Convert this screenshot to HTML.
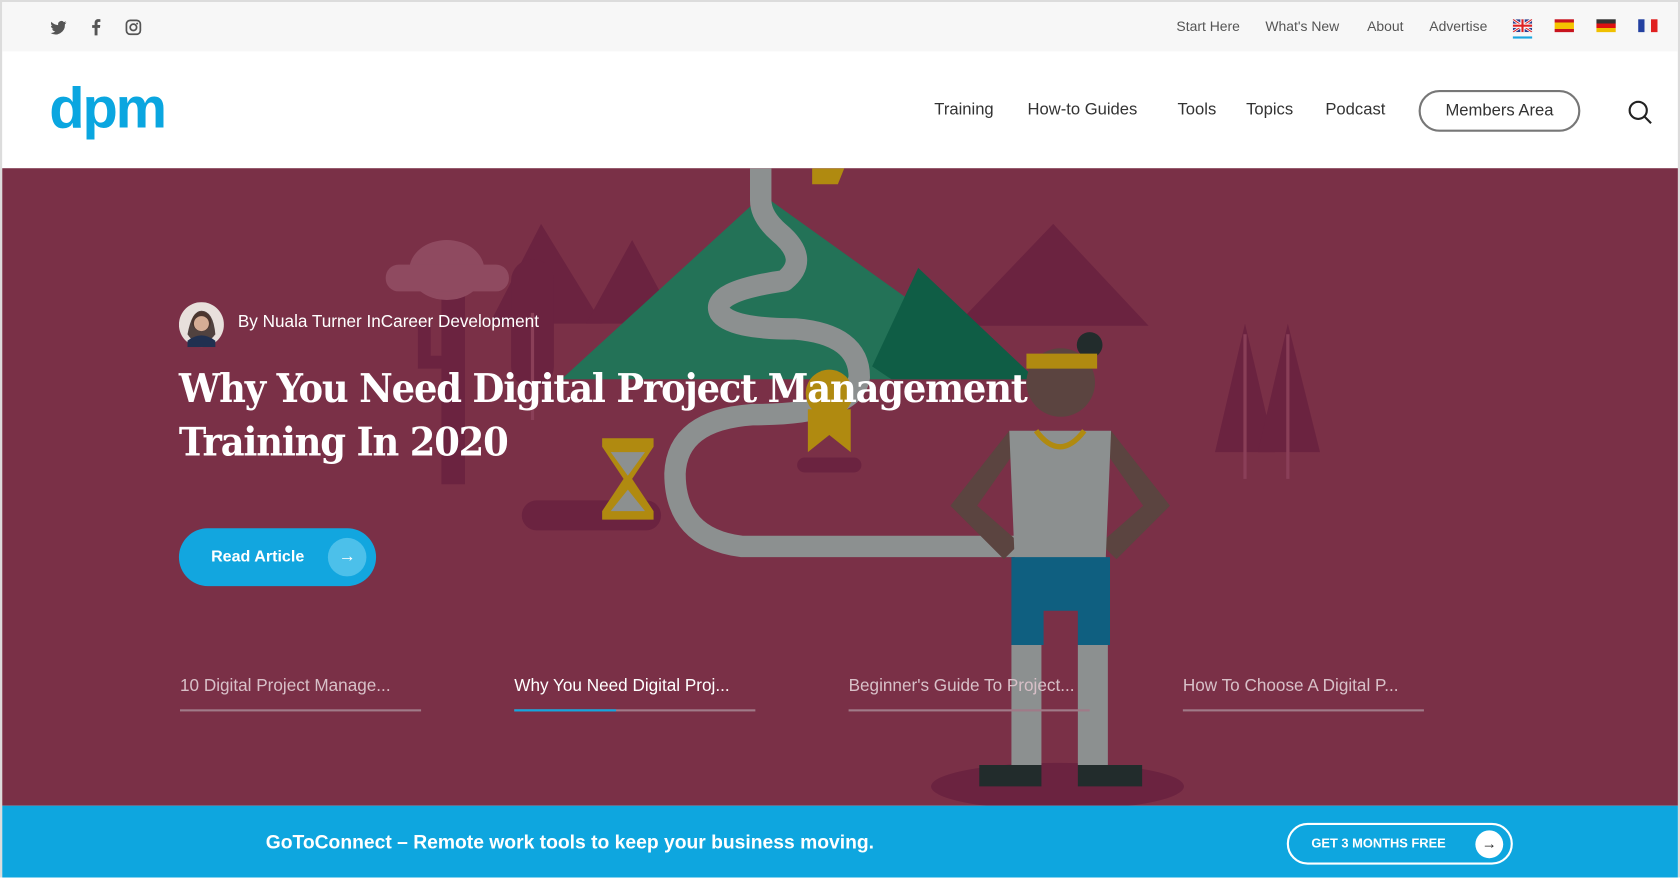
<!DOCTYPE html>
<html><head><meta charset="utf-8"><style>
*{margin:0;padding:0;box-sizing:border-box}
html,body{width:1680px;height:877px;overflow:hidden;background:#fff;font-family:"Liberation Sans",sans-serif}
#w{position:absolute;left:0;top:0;width:1568px;height:819px;transform:scale(1.07143);transform-origin:0 0;border:2px solid #dcdcdc;border-bottom:none;overflow:hidden}
.top{position:absolute;left:0;top:0;width:1568px;height:46px;background:#f7f7f7}
.a{position:absolute;white-space:nowrap}
.tl{font-size:13px;color:#555;top:15px}
.nav{font-size:15.5px;color:#333;top:92px}
.hero{position:absolute;left:0;top:155px;width:1568px;height:595px;background:#7a3047;overflow:hidden}
.bar{position:absolute;left:0;top:750px;width:1568px;height:69px;background:#0ea6df}
.tab{font-size:16px;color:#d8c0c8;top:630px}
.ul{position:absolute;top:660px;height:2px;width:225px;background:#a07a88}
</style></head><body><div id="w">
<div class="top"></div>
<svg class="a" style="left:45px;top:15px" width="100" height="18" viewBox="0 0 100 18">
<path d="M15 4c-.6.3-1.2.4-1.8.5.7-.4 1.1-1 1.4-1.7-.6.4-1.3.6-2 .8a3.1 3.1 0 0 0-5.3 2.8C4.700 6.300 2.500 5.100 1 3.300c-.8 1.400-.3 3.200 1 4.100-.5 0-1-.2-1.400-.4 0 1.500 1.100 2.800 2.500 3.100-.5.1-1 .2-1.400.1.4 1.300 1.600 2.100 2.900 2.200A6.300 6.300 0 0 1 0 13.700 8.800 8.800 0 0 0 13.600 6v-.4c.6-.4 1.100-1 1.400-1.600z" fill="#555"/>
<path d="M44 16V9h2.3l.3-2.700H44V4.700c0-.8.200-1.300 1.300-1.300h1.400V1c-.3 0-1.100-.1-2-.1-2 0-3.400 1.200-3.400 3.500v2h-2.300V9h2.300v7z" fill="#555"/>
<rect x="71" y="2" width="13" height="13" rx="3.5" fill="none" stroke="#555" stroke-width="1.6"/><circle cx="77.5" cy="8.5" r="3" fill="none" stroke="#555" stroke-width="1.6"/><circle cx="81" cy="5" r=".9" fill="#555"/>
</svg>
<div class="a tl" style="left:1096px">Start Here</div>
<div class="a tl" style="left:1179px">What's New</div>
<div class="a tl" style="left:1274px">About</div>
<div class="a tl" style="left:1332px">Advertise</div>
<svg class="a" style="left:1410px;top:16px" width="18" height="12" viewBox="0 0 18 12"><rect width="18" height="12" fill="#2b3f8e"/><path d="M0 0L18 12M18 0L0 12" stroke="#fff" stroke-width="2.5"/><path d="M0 0L18 12M18 0L0 12" stroke="#d22" stroke-width="1"/><path d="M9 0v12M0 6h18" stroke="#fff" stroke-width="4"/><path d="M9 0v12M0 6h18" stroke="#d22" stroke-width="2"/></svg>
<div class="a" style="left:1410px;top:32px;width:18px;height:2px;background:#19a6df"></div>
<div class="a" style="left:1449px;top:16px;width:18px;height:12px;background:linear-gradient(#c8141e 0 25%,#f5c400 25% 75%,#c8141e 75%)"></div>
<div class="a" style="left:1488px;top:16px;width:18px;height:12px;background:linear-gradient(#333 0 33%,#d11 33% 66%,#f0c000 66%)"></div>
<div class="a" style="left:1527px;top:16px;width:18px;height:12px;background:linear-gradient(90deg,#2340a0 0 33%,#f3f3f3 33% 66%,#e02020 66%)"></div>
<div class="a" style="left:44px;top:66px;font-size:54px;font-weight:bold;color:#0aa6e0;letter-spacing:-2px;line-height:66px">dpm</div>
<div class="a nav" style="left:870px">Training</div>
<div class="a nav" style="left:957px">How-to Guides</div>
<div class="a nav" style="left:1097px">Tools</div>
<div class="a nav" style="left:1161px">Topics</div>
<div class="a nav" style="left:1235px">Podcast</div>
<div class="a" style="left:1322px;top:82px;width:151px;height:39px;border:2px solid #777;border-radius:20px;font-size:15.5px;color:#333;text-align:center;line-height:35px">Members Area</div>
<svg class="a" style="left:1517px;top:91px" width="24" height="24" viewBox="0 0 24 24"><circle cx="10" cy="10" r="8" fill="none" stroke="#222" stroke-width="2"/><path d="M16 16l6 6" stroke="#222" stroke-width="2"/></svg>
<div class="hero">
<svg width="1568" height="595" viewBox="0 155 1568 595" style="position:absolute;left:0;top:0">
<g fill="#6b2340">
<path d="M503 207L455 300H560z"/><path d="M588 222L545 300H630z"/><path d="M981 207L890 302H1070z"/>
<path d="M1160 300L1132 420H1188z"/><path d="M1200 300L1172 420H1230z"/>
<ellipse cx="985" cy="732" rx="118" ry="22"/><rect x="485" y="465" width="130" height="28" rx="14"/><rect x="742" y="425" width="60" height="14" rx="7"/>
<rect x="475" y="240" width="40" height="120" rx="20"/>
<path d="M410 270h22v180h-22zM390 330h20v12h-20zM388 300h12v42h-12z"/>
</g>
<g fill="#8f4a60"><ellipse cx="415" cy="250" rx="35" ry="28"/><rect x="358" y="245" width="115" height="25" rx="12"/></g>
<g stroke="#8a3f58" stroke-width="3" fill="none"><path d="M1160 310V445M1200 310V445M495 290V390"/></g>
<path d="M710 180L522 352H950z" fill="#237257"/>
<path d="M855 248L812 340L830 352H965z" fill="#0f5d45"/>
<path d="M708 155V185Q708 200 725 215Q755 240 730 260Q660 270 670 290Q680 305 740 305Q800 310 800 350Q795 385 700 385Q630 390 628 440Q628 500 690 508H945" fill="none" stroke="#8c9090" stroke-width="20" stroke-linejoin="round"/>
<path d="M756 155h30l-6 15h-24z" fill="#b08a10"/>
<circle cx="772" cy="365" r="22" fill="#b08a10"/><path d="M752 380v40l20-16 20 16v-40z" fill="#b08a10"/>
<path d="M560 407h48v8l-20 30 20 30v8h-48v-8l20-30-20-30z" fill="#b08a10"/><path d="M568 420h32l-16 22zM584 455l16 20h-32z" fill="#8c9090"/>
<g fill="#5b4440"><path d="M940 400L885 470 935 520 950 505 910 470 945 420z"/><path d="M1035 400L1090 470 1040 520 1025 505 1065 470 1030 420z"/>
<circle cx="988" cy="355" r="32"/><circle cx="1015" cy="320" r="12" fill="#222c2c"/></g>
<path d="M956 328h66v14h-66z" fill="#b08a10"/>
<path d="M940 400h95l-5 120h-85z" fill="#8c9090"/><path d="M965 400q22 30 45 0" fill="none" stroke="#b08a10" stroke-width="5"/>
<path d="M942 518h92v82h-30v-32h-32v32h-30z" fill="#0f5f80"/>
<rect x="942" y="600" width="28" height="112" fill="#8c9090"/><rect x="1004" y="600" width="28" height="112" fill="#8c9090"/>
<path d="M912 712h58v20h-58zM1004 712h60v20h-60z" fill="#222c2c"/>
</svg>
<svg class="a" style="left:165px;top:125px" width="42" height="42"><circle cx="21" cy="21" r="21" fill="#e8e0dc"/><circle cx="21" cy="18" r="9" fill="#c89f88"/><path d="M8 30q4-22 13-22q11 0 13 22q-6 8-13 8q-8 0-13-8z" fill="#2a1a18" opacity=".8"/><circle cx="21" cy="20" r="7" fill="#d5ad95"/><path d="M8 36q13-10 26 0v6H8z" fill="#203050"/></svg>
<div class="a" style="left:220px;top:135px;font-size:16px;color:#fff">By Nuala Turner InCareer Development</div>
<div class="a" style="left:165px;top:180px;font-family:'DejaVu Serif','Liberation Serif',serif;font-weight:bold;font-size:37px;line-height:50px;color:#fff;letter-spacing:-1.2px;transform:scaleX(.93);transform-origin:0 0">Why You Need Digital Project Management<br>Training In 2020</div>
<div class="a" style="left:165px;top:336px;width:184px;height:54px;border-radius:27px;background:#12a6df;color:#fff;font-size:15px;font-weight:bold;line-height:54px;padding-left:30px">Read Article</div>
<div class="a" style="left:304px;top:345px;width:36px;height:36px;border-radius:50%;background:#4cc0ea;color:#fff;font-size:16px;text-align:center;line-height:35px">→</div>
<div class="a tab" style="left:166px;top:475px">10 Digital Project Manage...</div>
<div class="a tab" style="left:478px;top:475px;color:#fff">Why You Need Digital Proj...</div>
<div class="a tab" style="left:790px;top:475px">Beginner's Guide To Project...</div>
<div class="a tab" style="left:1102px;top:475px">How To Choose A Digital P...</div>
<div class="ul" style="left:166px;top:505px"></div><div class="ul" style="left:478px;top:505px"></div><div class="ul" style="left:478px;top:505px;width:95px;background:#12a6df"></div><div class="ul" style="left:790px;top:505px"></div><div class="ul" style="left:1102px;top:505px"></div>
</div>
<div class="bar"></div>
<div class="a" style="left:246px;top:774px;font-size:18px;font-weight:bold;color:#fff">GoToConnect – Remote work tools to keep your business moving.</div>
<div class="a" style="left:1199px;top:766px;width:211px;height:39px;border:2px solid #fff;border-radius:20px;color:#fff;font-size:12px;font-weight:bold;line-height:35px;padding-left:21px">GET 3 MONTHS FREE</div>
<div class="a" style="left:1375px;top:773px;width:26px;height:26px;border-radius:50%;background:#fff;color:#222;font-size:14px;text-align:center;line-height:25px">→</div>
</div></body></html>
